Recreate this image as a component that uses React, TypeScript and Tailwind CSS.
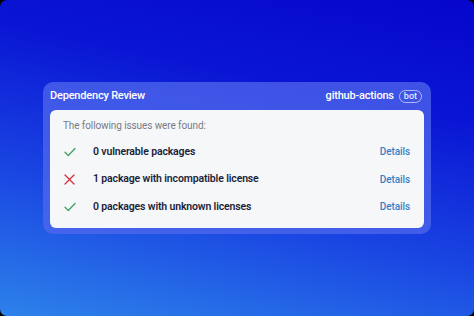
import React from "react";

function Check() {
  return (
    <svg width="12" height="10" viewBox="0 0 12 10" fill="none">
      <path d="M1 5.2 L4.3 8.5 L11 1.5" stroke="#3fa35f" strokeWidth="1.3" strokeLinecap="round" strokeLinejoin="round" />
    </svg>
  );
}
function Cross() {
  return (
    <svg width="11" height="11" viewBox="0 0 11 11" fill="none">
      <path d="M1 1 L10 10 M10 1 L1 10" stroke="#d0313b" strokeWidth="1.3" strokeLinecap="round" />
    </svg>
  );
}

const rows = [
  { ok: true, text: "0 vulnerable packages" },
  { ok: false, text: "1 package with incompatible license" },
  { ok: true, text: "0 packages with unknown licenses" },
];

export default function App() {
  return (
    <div className="w-[474px] h-[316px] bg-black" style={{ fontFamily: "Roboto, 'Noto Sans', sans-serif" }}>
      <div className="w-full h-full rounded-[7px] bg-[linear-gradient(192deg,#0606cc_0%,#0a16d4_30%,#1a46e2_65%,#2d82ea_100%)] pt-[82px] pl-[43px]">
        <div className="w-[388px] h-[152px] rounded-[10px] bg-[#5068ec]/75 px-[7px] pb-[6px] flex flex-col">
          <div className="h-[28px] flex items-center justify-between">
            <span className="text-white text-[11px] font-medium tracking-[-0.2px]">Dependency Review</span>
            <div className="flex items-center gap-[5px] pr-[2px]">
              <span className="text-white text-[11px] font-medium tracking-[-0.2px]">github-actions</span>
              <span className="text-white/85 text-[9px] font-medium border border-white/60 rounded-full px-[4px] leading-[11px] h-[13px]">bot</span>
            </div>
          </div>
          <div className="flex-1 bg-[#f6f7f9] rounded-[6px] pl-[13px] pr-[14px] pt-[8px]">
            <div className="text-[10px] text-[#777b86] h-[15px] leading-[15px] tracking-[-0.1px]">The following issues were found:</div>
            <div className="mt-[5px] flex flex-col">
              {rows.map((r, i) => (
                <div key={i} className="h-[27.5px] flex items-center">
                  <div className="w-[30px] flex items-center pl-[1px]">{r.ok ? <Check /> : <Cross />}</div>
                  <span className="flex-1 text-[10.5px] font-semibold text-[#1c1f3a] tracking-[-0.15px]">{r.text}</span>
                  <span className="text-[10px] font-medium text-[#3a7fc6] tracking-[-0.1px]">Details</span>
                </div>
              ))}
            </div>
          </div>
        </div>
      </div>
    </div>
  );
}
